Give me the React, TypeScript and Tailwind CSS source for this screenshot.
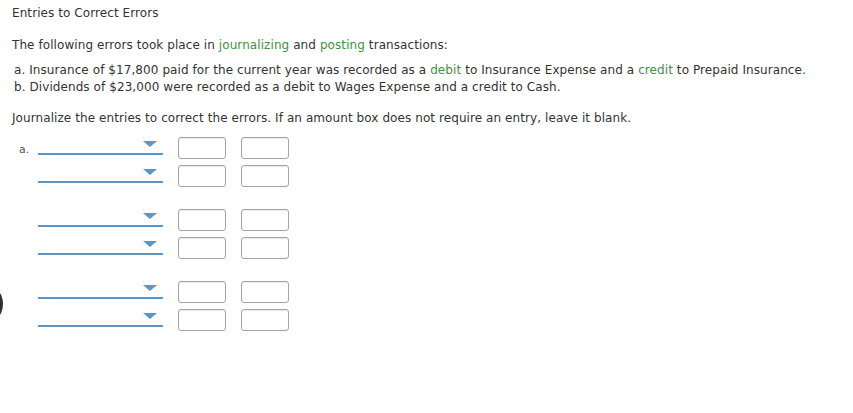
const rows = [
  { label: "a." },
  { label: "" },
  { label: "", gap: true },
  { label: "" },
  { label: "", gap: true },
  { label: "" },
];

function Dropdown() {
  return (
    <div className="flex h-[18px] w-[125px] justify-end border-b-2 border-[#5a96c6] pr-[6px] pt-[4px]">
      <svg width="14" height="6" viewBox="0 0 14 6">
        <polygon points="0,0 14,0 7,6" fill="#5a96c6" />
      </svg>
    </div>
  );
}

function AmountBox() {
  return (
    <div className="h-[22px] w-[48px] rounded-[3px] border border-[#a3a3a3] bg-white shadow-[inset_0_1px_1px_rgba(0,0,0,0.08)]" />
  );
}

export default function App() {
  return (
    <div className="relative min-h-[413px] bg-white px-[12px] pt-[5px] font-['DejaVu_Sans',Verdana,sans-serif] text-[12px] tracking-[0.08px] text-[#333]">
      <div className="leading-[17px]">Entries to Correct Errors</div>

      <p className="mt-[15px] leading-[17px]">
        The following errors took place in{" "}
        <span className="text-[#3f913f]">journalizing</span> and{" "}
        <span className="text-[#3f913f]">posting</span> transactions:
      </p>

      <ul className="mt-[8px] pl-[2px] leading-[17px]">
        <li>
          a. Insurance of $17,800 paid for the current year was recorded as a{" "}
          <span className="text-[#3f913f]">debit</span> to Insurance Expense and a{" "}
          <span className="text-[#3f913f]">credit</span> to Prepaid Insurance.
        </li>
        <li>b. Dividends of $23,000 were recorded as a debit to Wages Expense and a credit to Cash.</li>
      </ul>

      <p className="mt-[14px] leading-[17px]">
        Journalize the entries to correct the errors. If an amount box does not require an entry, leave it blank.
      </p>

      <div className="mt-[10px] flex flex-col">
        {rows.map((r, i) => (
          <div
            key={i}
            className={`flex items-start ${i === 0 ? "" : r.gap ? "mt-[22px]" : "mt-[6px]"}`}
          >
            <div className="w-[26px] pl-[7px] pt-[6px] text-[11px] leading-[14px] text-[#555]">{r.label}</div>
            <Dropdown />
            <div className="ml-[15px] flex gap-[15px]">
              <AmountBox />
              <AmountBox />
            </div>
          </div>
        ))}
      </div>

      <div className="absolute left-[-41px] top-[282px] h-[44px] w-[44px] rounded-full bg-[#2f2f2f]" />
    </div>
  );
}
